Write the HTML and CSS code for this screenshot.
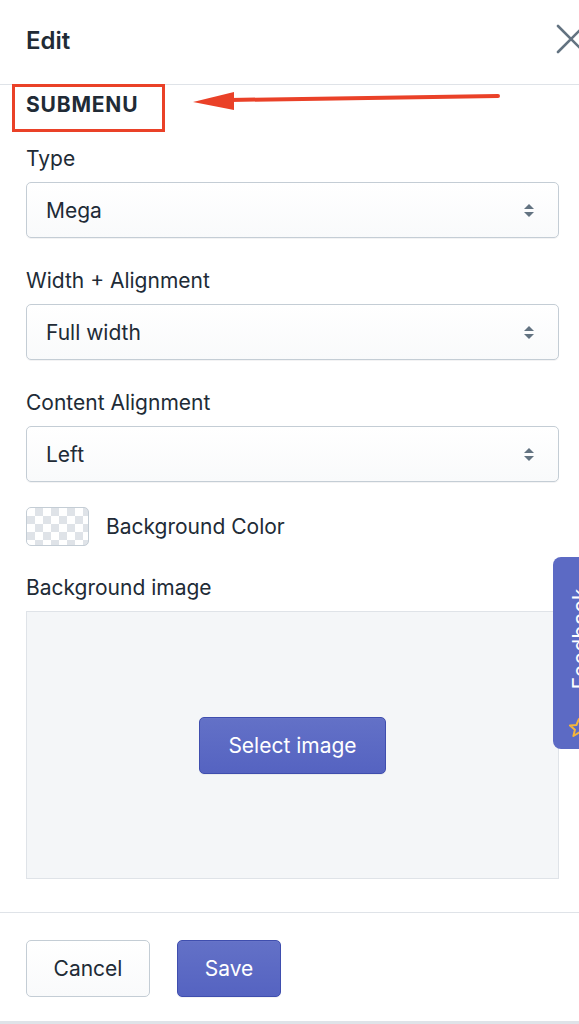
FILE: index.html
```html
<!DOCTYPE html>
<html lang="en">
<head>
    <meta charset="UTF-8">
    <meta name="viewport" content="width=device-width, initial-scale=1.0">
    <title>Edit submenu</title>
<link rel="stylesheet" href="styles.css">
</head>
<body>
    <div class="panel">
        <div class="panel-header">
            <div class="panel-title">Edit</div>
            <svg class="close-icon" width="32" height="32" viewBox="0 0 32 32">
                <path d="M3 3 L29 29 M29 3 L3 29" stroke="#637381" stroke-width="2.6" stroke-linecap="round"/>
            </svg>
        </div>
        <div class="panel-body">
            <div class="section-title">
                SUBMENU
                <span class="mark-box"></span>
            </div>
            <!-- annotation arrow pointing at the heading -->
            <svg class="mark-arrow" width="315" height="26" viewBox="0 0 315 26">
                <path d="M40 13 L308 9" stroke="#ea4128" stroke-width="4" stroke-linecap="round"/>
                <polygon points="3,15 44,5 44,23" fill="#ea4128"/>
            </svg>

            <div class="field">
                <div class="field-label">Type</div>
                <div class="select">
                    <span>Mega</span>
                    <span class="select-arrows"></span>
                </div>
            </div>
            <div class="field">
                <div class="field-label">Width + Alignment</div>
                <div class="select">
                    <span>Full width</span>
                    <span class="select-arrows"></span>
                </div>
            </div>
            <div class="field">
                <div class="field-label">Content Alignment</div>
                <div class="select">
                    <span>Left</span>
                    <span class="select-arrows"></span>
                </div>
            </div>

            <div class="color-row">
                <div class="swatch"></div>
                <div class="color-label">Background Color</div>
            </div>

            <div class="field image-field">
                <div class="field-label">Background image</div>
                <div class="image-drop">
                    <button class="btn btn-primary select-image">Select image</button>
                </div>
            </div>
        </div>
        <div class="panel-footer">
            <button class="btn btn-default">Cancel</button>
            <button class="btn btn-primary">Save</button>
        </div>
    </div>

    <div class="feedback-tab">
        <span class="feedback-text">Feedback</span>
        <svg class="feedback-star" width="22" height="22" viewBox="0 0 22 22">
            <polygon points="11,2 13.6,8 20,8.5 15.1,12.7 16.6,19 11,15.6 5.4,19 6.9,12.7 2,8.5 8.4,8" fill="none" stroke="#f5b53a" stroke-width="2" stroke-linejoin="round"/>
        </svg>
    </div>
</body>
</html>
```

FILE: styles.css
```css
* {
    margin: 0;
    padding: 0;
    box-sizing: border-box;
}
html, body {
    width: 579px;
    height: 1024px;
    overflow: hidden;
}
body {
    font-family: Inter, "Noto Sans", sans-serif;
    color: #212b36;
    background-color: #ffffff;
    position: relative;
}
.panel {
    display: flex;
    flex-direction: column;
    height: 1024px;
    border-bottom: 3px solid #dfe3e8;
}
.panel-header {
    height: 86px;
    display: flex;
    align-items: center;
    justify-content: space-between;
    padding-left: 26px;
    border-bottom: 1px solid #dfe3e8;
}
.panel-title {
    font-size: 24px;
    font-weight: 600;
    margin-top: -4px;
}
.close-icon {
    margin-right: -8px;
    margin-top: -6px;
    flex-shrink: 0;
}
.panel-body {
    position: relative;
    padding: 0 20px 0 26px;
    flex-grow: 1;
}
.section-title {
    position: relative;
    font-size: 21px;
    font-weight: 700;
    letter-spacing: 0.8px;
    line-height: 26px;
    padding-top: 7px;
    height: 62px;
}
.mark-box {
    position: absolute;
    left: -14px;
    top: -1px;
    width: 153px;
    height: 48px;
    border: 3px solid #ea4128;
}
.mark-arrow {
    position: absolute;
    left: 190px;
    top: 2px;
}
.field {
    margin-bottom: 31px;
}
.field-label {
    font-size: 21px;
    line-height: 24px;
    margin-bottom: 11px;
}
.select {
    height: 56px;
    display: flex;
    align-items: center;
    justify-content: space-between;
    padding: 0 24px 0 19px;
    font-size: 21px;
    border: 1px solid #c4cdd5;
    border-radius: 5px;
    background: linear-gradient(#ffffff, #f9fafb);
    box-shadow: 0 1px 0 rgba(22, 29, 37, 0.05);
}
.select-arrows {
    display: flex;
    flex-direction: column;
    gap: 3px;
}
.select-arrows::before,
.select-arrows::after {
    content: "";
    width: 0;
    height: 0;
    border-left: 5px solid transparent;
    border-right: 5px solid transparent;
}
.select-arrows::before {
    border-bottom: 5px solid #637381;
}
.select-arrows::after {
    border-top: 5px solid #637381;
}
.color-row {
    display: flex;
    align-items: center;
    gap: 17px;
    margin-top: -6px;
    margin-bottom: 30px;
}
.swatch {
    width: 63px;
    height: 39px;
    border: 1px solid #c4cdd5;
    border-radius: 5px;
    background-color: #ffffff;
    background-image: conic-gradient(#dfe3e8 25%, #ffffff 0 50%, #dfe3e8 0 75%, #ffffff 0);
    background-size: 16px 16px;
}
.color-label {
    font-size: 21px;
}
.image-field {
    margin-bottom: 33px;
}
.image-drop {
    height: 268px;
    background-color: #f4f6f8;
    border: 1px solid #dfe3e8;
    display: flex;
    justify-content: center;
    align-items: center;
}
.btn {
    font-family: Inter, "Noto Sans", sans-serif;
    font-size: 21px;
    height: 57px;
    border-radius: 5px;
    padding: 0 20px;
    cursor: pointer;
}
.btn-primary {
    color: #ffffff;
    background: linear-gradient(#6371c7, #5563c1);
    border: 1px solid #3f4eae;
    box-shadow: inset 0 1px 0 0 #6774c8, 0 1px 0 0 rgba(22, 29, 37, 0.05);
}
.btn-default {
    color: #212b36;
    background: linear-gradient(#ffffff, #f9fafb);
    border: 1px solid #c4cdd5;
}
.select-image {
    width: 187px;
}
.panel-footer {
    border-top: 1px solid #dfe3e8;
    padding: 27px 26px 0;
    height: 109px;
    display: flex;
    gap: 27px;
}
.panel-footer .btn-default {
    width: 124px;
}
.panel-footer .btn-primary {
    width: 104px;
}
.feedback-tab {
    position: absolute;
    left: 553px;
    top: 557px;
    width: 46px;
    height: 192px;
    background-color: #5c6ac4;
    border-radius: 8px 0 0 8px;
    display: flex;
    flex-direction: column;
    align-items: flex-start;
    justify-content: flex-end;
    padding-bottom: 10px;
    gap: 28px;
}
.feedback-text {
    writing-mode: vertical-rl;
    transform: rotate(180deg);
    color: #ffffff;
    font-size: 21px;
    line-height: 26px;
    letter-spacing: 0.5px;
    margin-left: 15px;
}
.feedback-star {
    margin-left: 15px;
}
```
